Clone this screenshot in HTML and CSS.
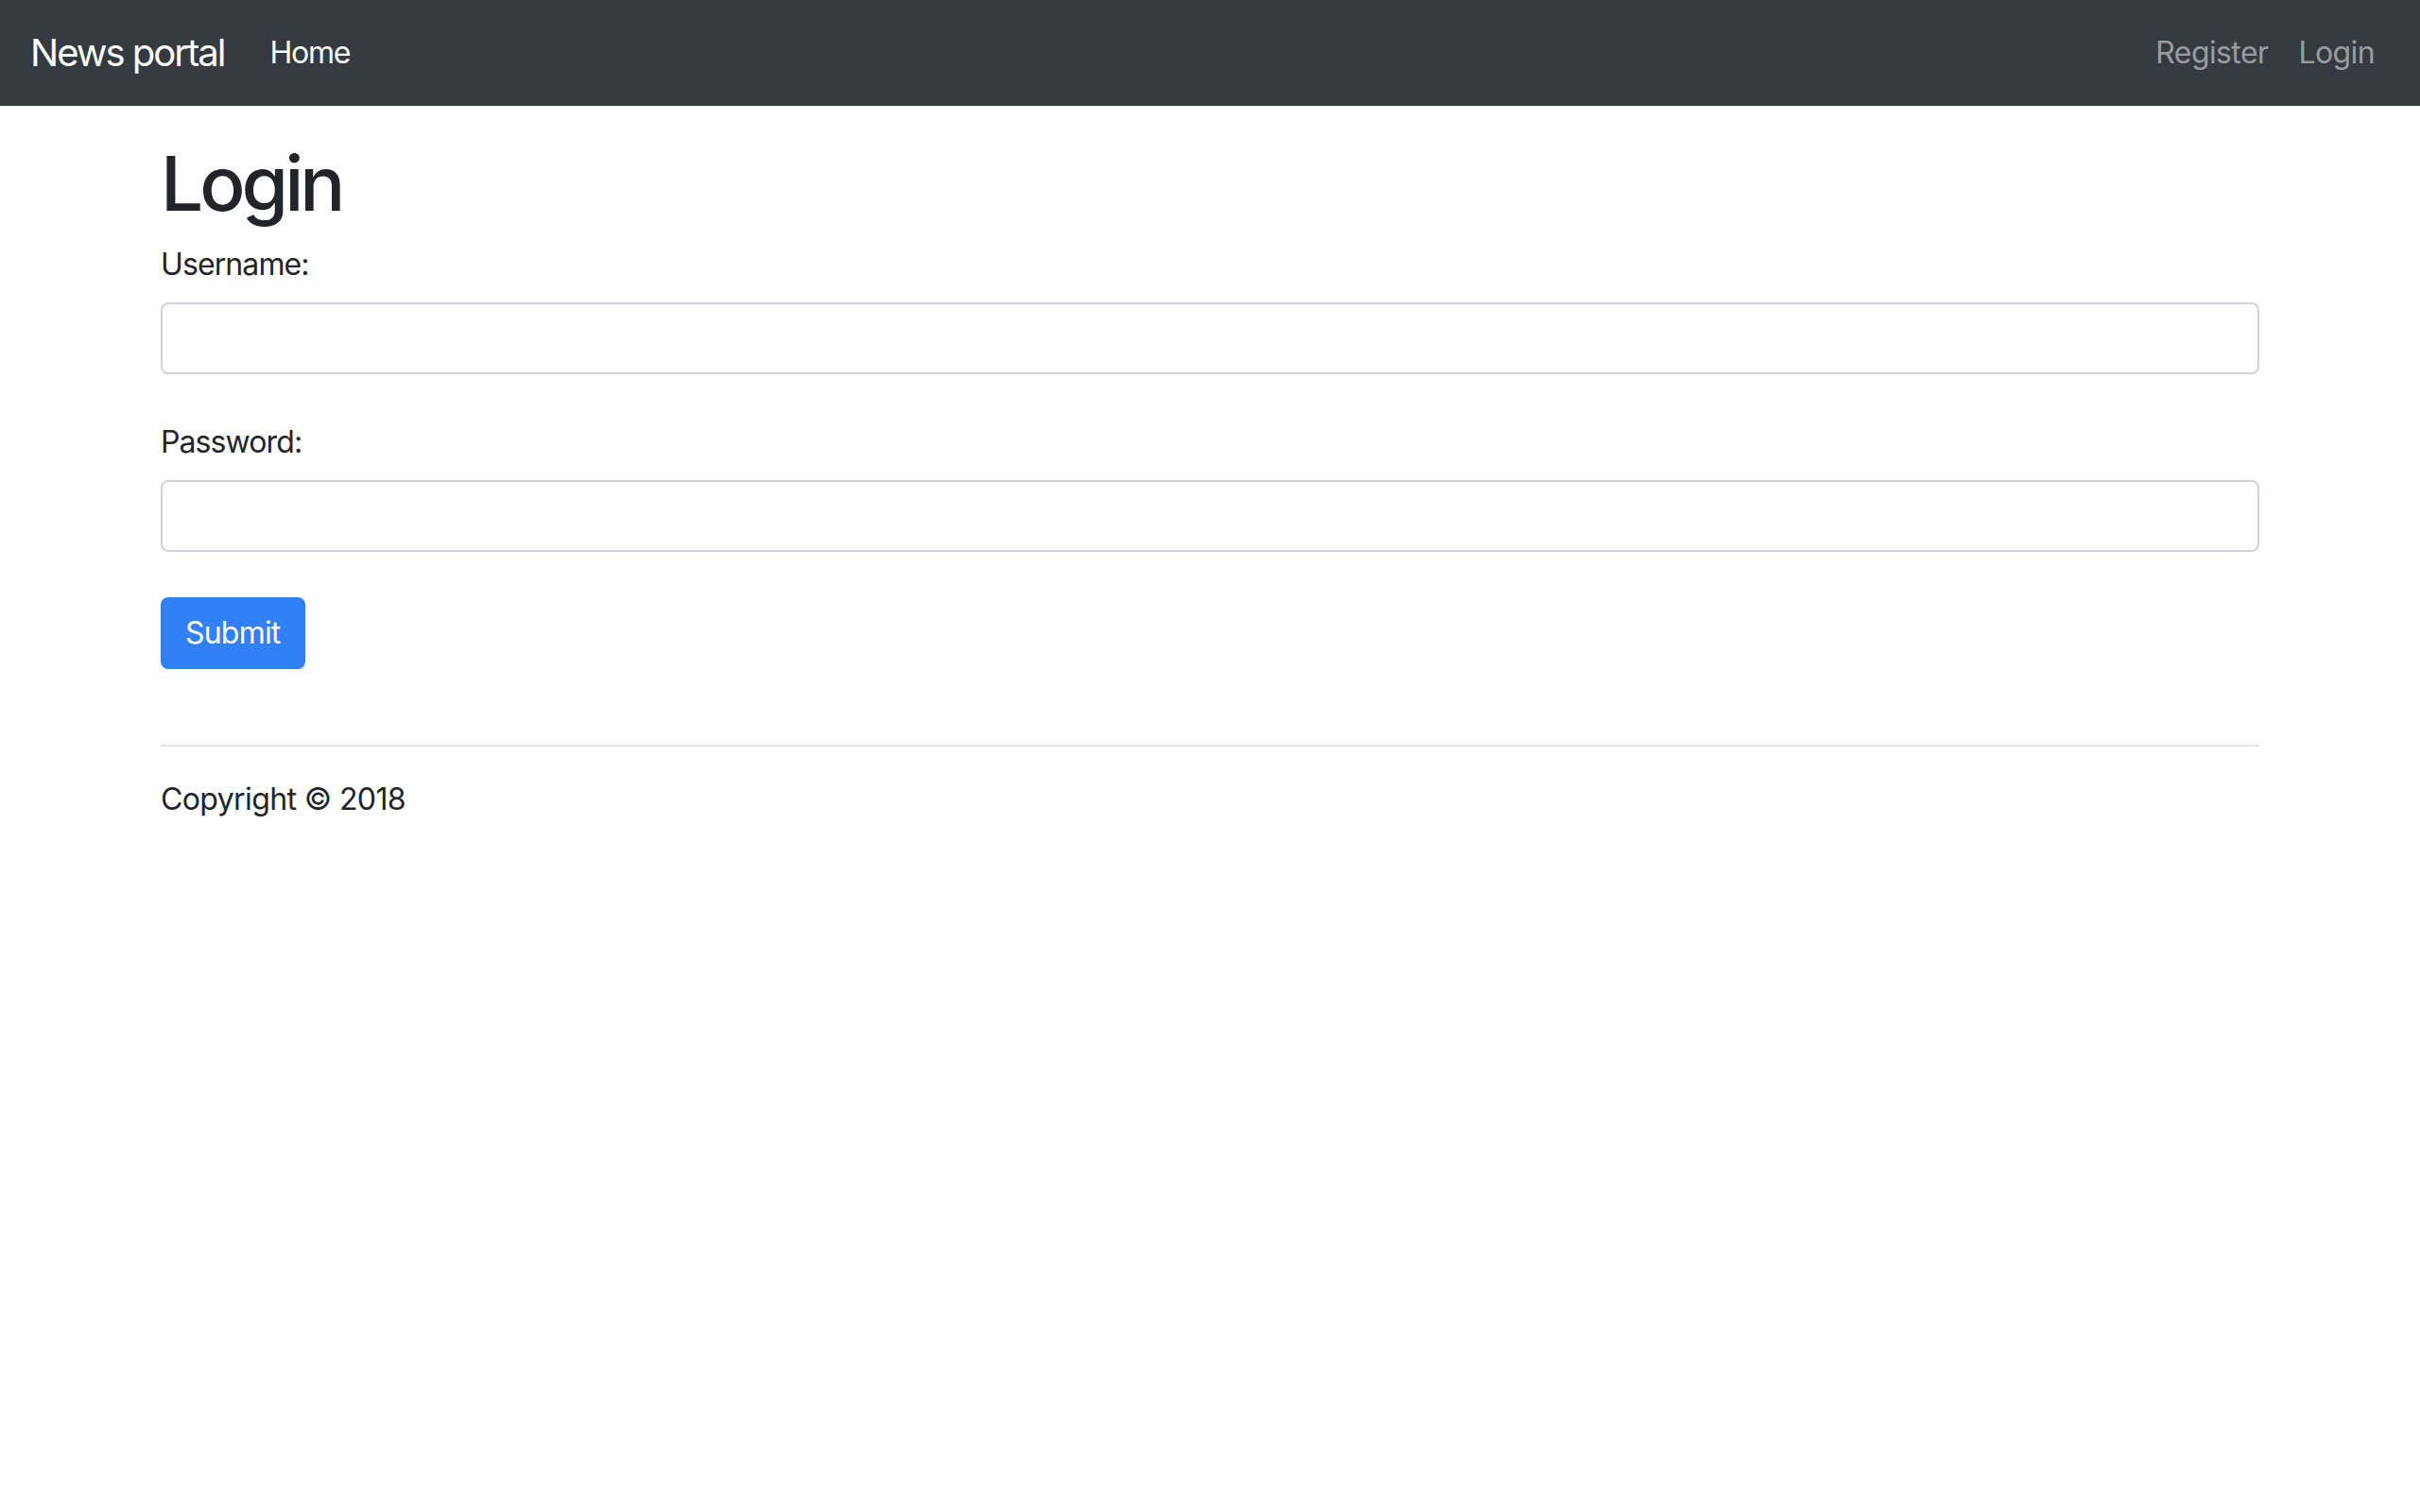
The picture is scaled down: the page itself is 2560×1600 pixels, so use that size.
FILE: index.html
```html
<!DOCTYPE html>
<html lang="en">
<head>
<meta charset="utf-8">
<title>Login - News portal</title>
<link rel="stylesheet" href="styles.css">
</head>
<body>
<nav class="navbar">
  <a class="brand" href="#">News portal</a>
  <ul class="nav">
    <li><a class="nav-link active" href="#">Home</a></li>
  </ul>
  <ul class="nav nav-right">
    <li><a class="nav-link" href="#">Register</a></li>
    <li><a class="nav-link" href="#">Login</a></li>
  </ul>
</nav>
<main class="container">
  <h1 class="title">Login</h1>
  <form class="login-form">
    <div class="form-group">
      <label class="form-label" for="username">Username:</label>
      <input class="form-control" type="text" id="username" name="username">
    </div>
    <div class="form-group">
      <label class="form-label" for="password">Password:</label>
      <input class="form-control" type="password" id="password" name="password">
    </div>
    <button class="btn-primary" type="submit">Submit</button>
  </form>
  <hr class="divider">
  <footer class="footer">
    <p>Copyright © 2018</p>
  </footer>
</main>
</body>
</html>
```
FILE: styles.css
```css
* { box-sizing: border-box; }
html, body { margin: 0; padding: 0; }
body {
  font-family: Inter, "Liberation Sans", sans-serif;
  font-size: 32px;
  line-height: 1.5;
  color: #212529;
  background: #fff;
}
a { text-decoration: none; }

.navbar {
  display: flex;
  align-items: center;
  background: #343a40;
  padding: 16px 32px;
}
.brand {
  font-size: 40px;
  line-height: 60px;
  padding: 10px 0;
  margin-right: 32px;
  color: #fff;
  letter-spacing: -2px;
}
.nav {
  display: flex;
  list-style: none;
  margin: 0;
  padding: 0;
}
.nav-right { margin-left: auto; }
.nav-link {
  display: block;
  padding: 16px 16px;
  color: rgba(255, 255, 255, 0.5);
  letter-spacing: -0.6px;
}
.nav-link.active {
  color: #fff;
  letter-spacing: -1.2px;
}

.container {
  max-width: 2280px;
  margin: 0 auto;
  padding: 0 30px;
}
.title {
  font-size: 80px;
  font-weight: 500;
  line-height: 1.2;
  margin: 34px 0 14px;
  letter-spacing: -4px;
}
.form-group { margin-bottom: 48px; }
.form-label {
  display: block;
  margin-bottom: 16px;
  letter-spacing: -0.9px;
}
.form-control {
  display: block;
  width: 100%;
  height: 76px;
  padding: 12px 24px;
  font: inherit;
  color: #495057;
  background: #fff;
  border: 2px solid #ced4da;
  border-radius: 8px;
  outline: none;
}
.btn-primary {
  display: inline-block;
  font: inherit;
  line-height: 48px;
  padding: 12px 24px;
  color: #fff;
  background: #3280f6;
  border: 2px solid #3280f6;
  border-radius: 8px;
  letter-spacing: -0.8px;
  cursor: pointer;
}
.divider {
  margin: 80px 0 32px;
  border: 0;
  border-top: 2px solid rgba(0, 0, 0, 0.1);
}
.footer p {
  margin: 0 0 32px;
  letter-spacing: -0.6px;
}
```
